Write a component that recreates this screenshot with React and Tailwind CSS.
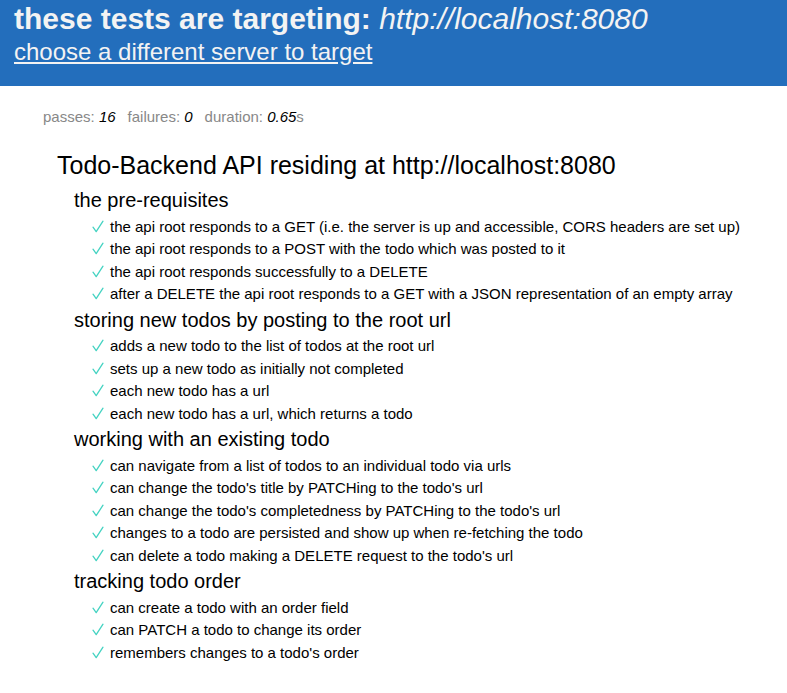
import React from "react";

const suites = [
  {
    title: "the pre-requisites",
    tests: [
      "the api root responds to a GET (i.e. the server is up and accessible, CORS headers are set up)",
      "the api root responds to a POST with the todo which was posted to it",
      "the api root responds successfully to a DELETE",
      "after a DELETE the api root responds to a GET with a JSON representation of an empty array",
    ],
  },
  {
    title: "storing new todos by posting to the root url",
    tests: [
      "adds a new todo to the list of todos at the root url",
      "sets up a new todo as initially not completed",
      "each new todo has a url",
      "each new todo has a url, which returns a todo",
    ],
  },
  {
    title: "working with an existing todo",
    tests: [
      "can navigate from a list of todos to an individual todo via urls",
      "can change the todo's title by PATCHing to the todo's url",
      "can change the todo's completedness by PATCHing to the todo's url",
      "changes to a todo are persisted and show up when re-fetching the todo",
      "can delete a todo making a DELETE request to the todo's url",
    ],
  },
  {
    title: "tracking todo order",
    tests: [
      "can create a todo with an order field",
      "can PATCH a todo to change its order",
      "remembers changes to a todo's order",
    ],
  },
];

function Check() {
  return (
    <svg
      width="12"
      height="13"
      viewBox="0 0 12 13"
      className="mt-[4px] mr-[6px] ml-[1px] shrink-0"
      fill="none"
      stroke="#45d3c2"
      strokeWidth="1.3"
      strokeLinecap="round"
      strokeLinejoin="round"
    >
      <path d="M1 7.2 L4.2 11.6 L11 1.2" />
    </svg>
  );
}

export default function App() {
  return (
    <div
      className="min-h-[693px] bg-white text-black"
      style={{ fontFamily: '"Liberation Sans", Arial, sans-serif' }}
    >
      <header className="h-[86px] bg-[#236ebc] px-[14px] pt-[3px] text-[#f3f3f3]">
        <div className="text-[30px] font-bold leading-[32px]">
          these tests are targeting: <em className="font-normal">http://localhost:8080</em>
        </div>
        <a href="#" className="mt-[3px] block text-[24px] leading-[28px] underline">
          choose a different server to target
        </a>
      </header>
      <div className="ml-[43px] mt-[21px] text-[15px] leading-[20px] text-[#888]">
        passes: <em className="text-black">16</em>
        <span className="ml-[12px]">failures: </span>
        <em className="text-black">0</em>
        <span className="ml-[12px]">duration: </span>
        <em className="text-black">0.65</em>s
      </div>
      <div className="ml-[57px] mt-[20px]">
        <h1 className="mb-[3px] text-[25px] leading-[36px]">
          Todo-Backend API residing at http://localhost:8080
        </h1>
        <div className="ml-[17px]">
          {suites.map((s) => (
            <div key={s.title}>
              <h2 className="text-[20px] leading-[29.5px]">{s.title}</h2>
              <ul className="ml-[17px]">
                {s.tests.map((t) => (
                  <li key={t} className="flex text-[15px] leading-[22.5px]">
                    <Check />
                    <span>{t}</span>
                  </li>
                ))}
              </ul>
            </div>
          ))}
        </div>
      </div>
    </div>
  );
}
